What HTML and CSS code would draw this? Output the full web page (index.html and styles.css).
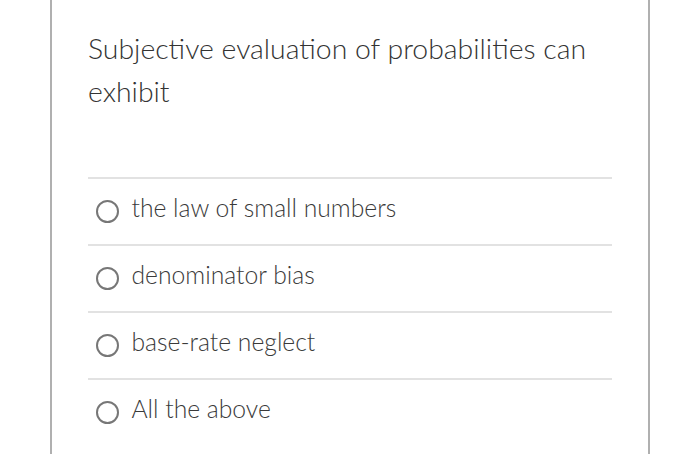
FILE: index.html
```html
<!DOCTYPE html>
<html>
<head>
<meta charset="utf-8">
<link rel="stylesheet" href="styles.css">
</head>
<body>
<div class="card">
  <p class="question">Subjective evaluation of probabilities can exhibit</p>
  <ul class="options">
    <li class="option"><span class="radio"></span><span class="label">the law of small numbers</span></li>
    <li class="option"><span class="radio"></span><span class="label">denominator bias</span></li>
    <li class="option"><span class="radio"></span><span class="label">base-rate neglect</span></li>
    <li class="option"><span class="radio"></span><span class="label">All the above</span></li>
  </ul>
</div>
</body>
</html>
```
FILE: styles.css
```css
html, body {
  margin: 0;
  padding: 0;
  background: #fff;
}
body {
  font-family: Lato, "Liberation Sans", sans-serif;
  font-weight: 300;
  height: 454px;
  overflow: hidden;
}
.card {
  margin-left: 50px;
  width: 524px;
  height: 454px;
  border-left: 2px solid #b0b0b0;
  border-right: 2px solid #b0b0b0;
  padding: 0 36px;
  box-sizing: content-box;
}
.question {
  margin: 0;
  padding-top: 27px;
  font-size: 28.4px;
  line-height: 43px;
  color: #333;
  width: 520px;
}
.options {
  list-style: none;
  margin: 64px 0 0;
  padding: 0;
  width: 524px;
}
.option {
  display: flex;
  align-items: center;
  gap: 12.5px;
  height: 65px;
  border-top: 2px solid #e2e2e2;
  padding-left: 8px;
}
.radio {
  width: 19px;
  height: 19px;
  border: 2.6px solid #777;
  border-radius: 50%;
  flex: none;
  margin-top: -1px;
}
.label {
  font-size: 24.7px;
  line-height: 30px;
  padding-bottom: 7px;
  color: #3a3a3a;
}
```
